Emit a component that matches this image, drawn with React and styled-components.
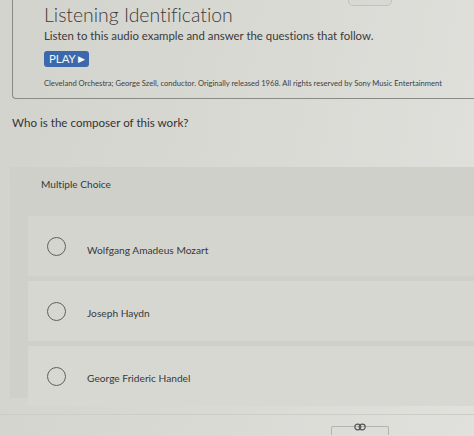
import React from 'react';
import styled, { createGlobalStyle } from 'styled-components';

const GlobalStyle = createGlobalStyle`
    html, body {
        margin: 0;
        padding: 0;
    }
    body {
        width: 474px;
        height: 436px;
        overflow: hidden;
        background: linear-gradient(100deg, #d3d3ce 0%, #dadad5 55%, #e0e0dc 100%);
        font-family: Lato, "Open Sans", sans-serif;
        font-variant-ligatures: none;
        color: #383838;
    }
`;

const Page = styled.div`
    position: relative;
    display: flex;
    flex-direction: column;
    height: 436px;
`;

const TopTab = styled.div`
    position: absolute;
    top: -4px;
    left: 348px;
    width: 42px;
    height: 8px;
    border: 1px solid #c2c2bd;
    border-radius: 0 0 5px 5px;
    background: #d9d9d4;
`;

const IntroCard = styled.section`
    margin-left: 12px;
    padding: 5px 0 0 31px;
    border-left: 1px solid #8a8a86;
    border-bottom: 1px solid #8a8a86;
    border-bottom-left-radius: 4px;
    height: 93px;
`;

const Title = styled.h1`
    margin: 0;
    font-size: 19.4px;
    font-weight: 300;
    line-height: 20px;
    color: #3a3a3a;
`;

const Lead = styled.p`
    margin: 3px 0 0;
    font-size: 11.4px;
    line-height: 16px;
    color: #3a3a3a;
`;

const PlayButton = styled.button`
    display: flex;
    align-items: center;
    gap: 2px;
    margin-top: 7px;
    height: 16px;
    padding: 0 4px 0 5px;
    border: none;
    border-radius: 3px;
    background: #3c68ac;
    color: #f4f6fa;
    font-family: inherit;
    font-size: 11.4px;
    line-height: 16px;
`;

const Arrow = styled.span`
    font-size: 9px;
    line-height: 16px;
`;

const Credits = styled.p`
    margin: 11px 0 0;
    font-size: 7.6px;
    line-height: 10px;
    color: #3e3e3e;
    white-space: nowrap;
`;

const Question = styled.p`
    margin: 16px 0 0 12px;
    font-size: 11.6px;
    line-height: 16px;
    color: #343434;
`;

const ChoicePanel = styled.section`
    margin-top: 36px;
    margin-left: 10px;
    padding-top: 10px;
    height: 221px;
    background: #d0d0cb;
`;

const PanelLabel = styled.div`
    padding-left: 31px;
    font-size: 10.1px;
    line-height: 14px;
    color: #383838;
`;

const Options = styled.div`
    display: flex;
    flex-direction: column;
    gap: 5px;
    margin: 25px 0 0 18px;
`;

const OptionRow = styled.label`
    display: flex;
    align-items: center;
    height: 60px;
    padding-left: 19px;
    background: ${p => p.$tint};
`;

const Radio = styled.span`
    width: 19px;
    height: 19px;
    border: 1.4px solid #606060;
    border-radius: 50%;
    box-sizing: border-box;
`;

const OptionText = styled.span`
    margin-left: 21px;
    margin-top: ${p => p.$nudge}px;
    font-size: 10.2px;
    color: #383838;
`;

const Footer = styled.div`
    margin-top: 16px;
    border-top: 1px solid #cdcdc8;
    height: 18px;
`;

const LinkBox = styled.div`
    display: flex;
    justify-content: center;
    margin: 11px 0 0 331px;
    width: 56px;
    height: 8px;
    border: 1px solid #b4b4af;
    border-bottom: none;
    border-radius: 2px 2px 0 0;
    background: #dcdcd8;
`;

const LinkIcon = () => (
    <svg width="12" height="8" viewBox="0 0 12 8" style={{ marginTop: -4 }}>
        <rect x="0.8" y="1.2" width="6" height="5.6" rx="2.8" fill="none" stroke="#555" strokeWidth="1.2" />
        <rect x="5.2" y="1.2" width="6" height="5.6" rx="2.8" fill="none" stroke="#555" strokeWidth="1.2" />
    </svg>
);

const choices = [
    { name: 'Wolfgang Amadeus Mozart', tint: '#d5d5d0', nudge: 8 },
    { name: 'Joseph Haydn', tint: '#d7d7d2', nudge: 3 },
    { name: 'George Frideric Handel', tint: '#d8d8d3', nudge: 3 },
];

const App = () => {
    return (
        <Page>
            <GlobalStyle />
            <TopTab />
            <IntroCard>
                <Title>Listening Identification</Title>
                <Lead>Listen to this audio example and answer the questions that follow.</Lead>
                <PlayButton>PLAY <Arrow>▶</Arrow></PlayButton>
                <Credits>
                    Cleveland Orchestra; George Szell, conductor. Originally released 1968. All rights reserved by Sony Music Entertainment
                </Credits>
            </IntroCard>
            <Question>Who is the composer of this work?</Question>
            <ChoicePanel>
                <PanelLabel>Multiple Choice</PanelLabel>
                <Options>
                    {choices.map(c => (
                        <OptionRow key={c.name} $tint={c.tint}>
                            <Radio />
                            <OptionText $nudge={c.nudge}>{c.name}</OptionText>
                        </OptionRow>
                    ))}
                </Options>
            </ChoicePanel>
            <Footer>
                <LinkBox>
                    <LinkIcon />
                </LinkBox>
            </Footer>
        </Page>
    );
};

export default App;
